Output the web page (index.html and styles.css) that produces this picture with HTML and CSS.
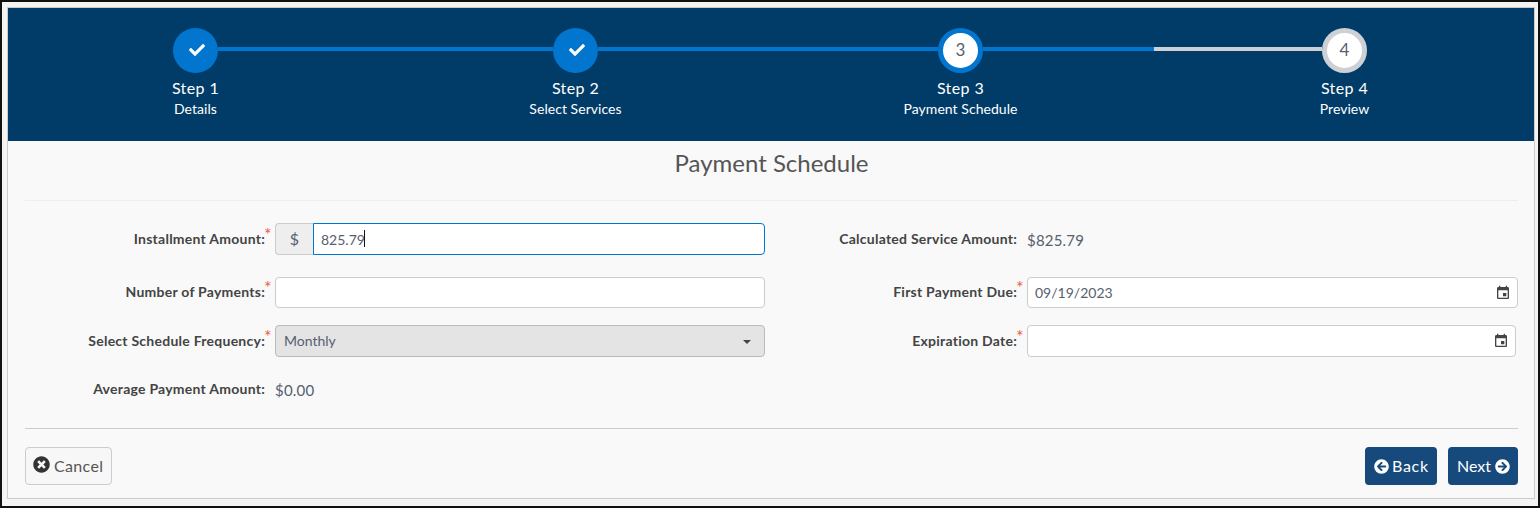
FILE: index.html
```html
<!DOCTYPE html>
<html lang="en">
<head>
    <meta charset="UTF-8">
    <title>Payment Schedule</title>
    <link rel="stylesheet" href="styles.css">
</head>
<body>
    <div class="panel">
        <div class="stepper">
            <div class="step done">
                <div class="step-circle">
                    <svg class="check" viewBox="0 0 512 512"><path d="M173.898 439.404l-166.4-166.4c-9.997-9.997-9.997-26.206 0-36.204l36.203-36.204c9.997-9.998 26.207-9.998 36.204 0L192 312.69 432.095 72.596c9.997-9.997 26.207-9.997 36.204 0l36.203 36.204c9.997 9.997 9.997 26.206 0 36.204l-294.4 294.401c-9.998 9.997-26.207 9.997-36.204-.001z"/></svg>
                </div>
                <div class="step-title">Step 1</div>
                <div class="step-name">Details</div>
            </div>
            <div class="connector first"></div>
            <div class="step done">
                <div class="step-circle">
                    <svg class="check" viewBox="0 0 512 512"><path d="M173.898 439.404l-166.4-166.4c-9.997-9.997-9.997-26.206 0-36.204l36.203-36.204c9.997-9.998 26.207-9.998 36.204 0L192 312.69 432.095 72.596c9.997-9.997 26.207-9.997 36.204 0l36.203 36.204c9.997 9.997 9.997 26.206 0 36.204l-294.4 294.401c-9.998 9.997-26.207 9.997-36.204-.001z"/></svg>
                </div>
                <div class="step-title">Step 2</div>
                <div class="step-name">Select Services</div>
            </div>
            <div class="connector second"></div>
            <div class="step current">
                <div class="step-circle">3</div>
                <div class="step-title">Step 3</div>
                <div class="step-name">Payment Schedule</div>
            </div>
            <div class="connector third"></div>
            <div class="step upcoming">
                <div class="step-circle">4</div>
                <div class="step-title">Step 4</div>
                <div class="step-name">Preview</div>
            </div>
        </div>

        <div class="content">
            <h2 class="title">Payment Schedule</h2>

            <form class="form-grid">
                <label class="field-label">Installment Amount:<span class="req">*</span></label>
                <div class="input-group">
                    <span class="addon">$</span>
                    <input type="text" class="input focused" value="825.79">
                    <span class="caret"></span>
                </div>
                <label class="field-label">Calculated Service Amount:</label>
                <div class="static-value">$825.79</div>

                <label class="field-label short">Number of Payments:<span class="req">*</span></label>
                <input type="text" class="input short">
                <label class="field-label short">First Payment Due:<span class="req">*</span></label>
                <input type="date" class="input date wide short" value="2023-09-19">

                <label class="field-label">Select Schedule Frequency:<span class="req">*</span></label>
                <div class="select-wrap">
                    <select class="input select" disabled>
                        <option>Monthly</option>
                    </select>
                    <span class="select-arrow"></span>
                </div>
                <label class="field-label">Expiration Date:<span class="req">*</span></label>
                <input type="date" class="input date empty">

                <label class="field-label short">Average Payment Amount:</label>
                <div class="static-value">$0.00</div>
            </form>

            <div class="footer">
                <button type="button" class="btn btn-cancel">
                    <svg class="icon" viewBox="0 0 512 512"><path d="M256 8C119 8 8 119 8 256s111 248 248 248 248-111 248-248S393 8 256 8zm121.6 313.1c4.7 4.7 4.7 12.3 0 17L338 377.6c-4.7 4.7-12.3 4.7-17 0L256 312l-65.1 65.6c-4.7 4.7-12.3 4.7-17 0L134.4 338c-4.7-4.7-4.7-12.3 0-17l65.6-65-65.6-65.1c-4.7-4.7-4.7-12.3 0-17l39.6-39.6c4.7-4.7 12.3-4.7 17 0l65 65.7 65.1-65.6c4.7-4.7 12.3-4.7 17 0l39.6 39.6c4.7 4.7 4.7 12.3 0 17L312 256l65.6 65.1z"/></svg>
                    <span class="btn-text">Cancel</span>
                </button>
                <div class="nav-buttons">
                    <button type="button" class="btn btn-primary back">
                        <svg class="icon" viewBox="0 0 512 512"><path d="M256 504C119 504 8 393 8 256S119 8 256 8s248 111 248 248-111 248-248 248zm28.9-143.6L209.4 288H392c13.3 0 24-10.7 24-24v-16c0-13.3-10.7-24-24-24H209.4l75.5-72.4c9.7-9.3 9.9-24.8.4-34.3l-11-10.9c-9.4-9.4-24.6-9.4-33.9 0L107.7 239c-9.4 9.4-9.4 24.6 0 33.9l132.7 132.7c9.4 9.4 24.6 9.4 33.9 0l11-10.9c9.5-9.5 9.3-25-.4-34.3z"/></svg>
                        <span class="btn-text">Back</span>
                    </button>
                    <button type="button" class="btn btn-primary next">
                        <span class="btn-text">Next</span>
                        <svg class="icon" viewBox="0 0 512 512"><path d="M256 8c137 0 248 111 248 248S393 504 256 504 8 393 8 256 119 8 256 8zm-28.9 143.6l75.5 72.4H120c-13.3 0-24 10.7-24 24v16c0 13.3 10.7 24 24 24h182.6l-75.5 72.4c-9.7 9.3-9.9 24.8-.4 34.3l11 10.9c9.4 9.4 24.6 9.4 33.9 0L404.3 273c9.4-9.4 9.4-24.6 0-33.9L271.6 106.3c-9.4-9.4-24.6-9.4-33.9 0l-11 10.9c-9.5 9.6-9.3 25.1.4 34.4z"/></svg>
                    </button>
                </div>
            </div>
        </div>
    </div>
</body>
</html>
```

FILE: styles.css
```css
* {
    margin: 0;
    padding: 0;
    box-sizing: border-box;
    font-family: Lato, "Open Sans", sans-serif;
}

body {
    width: 1540px;
    height: 508px;
    border: 2px solid #111;
    background-color: #f4f4f4;
    padding: 5px 3px 6px 5px;
    overflow: hidden;
}

.panel {
    height: 492px;
    border: 1px solid #ccc;
    background-color: #f9f9f9;
}

/* Stepper */
.stepper {
    height: 133px;
    background-color: #013c68;
    display: flex;
    align-items: flex-start;
    padding: 20px 0 0 165px;
}

.step {
    width: 45px;
    display: flex;
    flex-direction: column;
    align-items: center;
    color: #fff;
    white-space: nowrap;
}

.step-circle {
    width: 45px;
    height: 45px;
    border-radius: 50%;
    display: flex;
    justify-content: center;
    align-items: center;
    padding-bottom: 2px;
    background-color: #fff;
    color: #56606e;
    font-size: 17px;
    margin-bottom: 4px;
}

.step.done .step-circle {
    background-color: #0275cf;
}

.step.current .step-circle {
    border: 5px solid #0275cf;
}

.step.upcoming .step-circle {
    border: 5px solid #cdd0d4;
}

.check {
    width: 16px;
    height: 16px;
    margin-left: 2px;
    fill: #fff;
}

.step-title {
    font-size: 16px;
    line-height: 21px;
    letter-spacing: 0.4px;
}

.step-name {
    font-size: 14px;
    line-height: 21px;
    letter-spacing: 0.05px;
}

.connector {
    height: 4px;
    margin-top: 19px;
    background-color: #0275cf;
}

.connector.first {
    width: 335px;
}

.connector.second {
    width: 340px;
}

.connector.third {
    width: 339px;
    background: linear-gradient(to right, #0275cf 50.5%, #cdd0d4 50.5%);
}

/* Form */
.content {
    padding: 0 16px 0 17px;
}

.title {
    height: 60px;
    border-bottom: 1px solid #eee;
    text-align: center;
    font-size: 24px;
    font-weight: 400;
    line-height: 44px;
    color: #555;
}

.form-grid {
    display: grid;
    grid-template-columns: 250px 490px 262px 489px;
    grid-template-rows: 54px 48px 49px 32px;
    align-items: start;
    margin-top: 22px;
    padding-bottom: 22px;
    border-bottom: 1px solid #ccc;
}

.field-label {
    position: relative;
    justify-self: end;
    margin-right: 10px;
    height: 32px;
    line-height: 32px;
    font-size: 14px;
    font-weight: 700;
    letter-spacing: 0.25px;
    color: #444;
}

.field-label.short {
    line-height: 30px;
}

.req {
    position: absolute;
    left: 100%;
    top: -5px;
    margin-left: -1px;
    color: #f0594e;
    font-size: 18px;
    font-weight: 400;
}

.input {
    display: block;
    width: 100%;
    height: 32px;
    padding: 0 7px;
    border: 1px solid #ccc;
    border-radius: 4px;
    background-color: #fff;
    font-size: 14px;
    color: #56606e;
    outline: none;
}

.input.short {
    height: 31px;
}

.input-group {
    position: relative;
    display: flex;
}

.addon {
    width: 38px;
    height: 32px;
    flex-shrink: 0;
    border: 1px solid #ccc;
    border-right: none;
    border-radius: 4px 0 0 4px;
    background-color: #eee;
    text-align: center;
    line-height: 30px;
    font-size: 16px;
    color: #56606e;
}

.input.focused {
    border-color: #0275cf;
    border-radius: 0 4px 4px 0;
}

.caret {
    position: absolute;
    left: 89px;
    top: 7px;
    width: 1px;
    height: 17px;
    background-color: #111;
}

.input.date {
    padding: 0 6px 0 7px;
    font-size: 14px;
}

.input.date.wide {
    width: 491px;
}

.input.date.empty::-webkit-datetime-edit {
    color: transparent;
}

.input.date::-webkit-datetime-edit-month-field,
.input.date::-webkit-datetime-edit-day-field,
.input.date::-webkit-datetime-edit-year-field {
    padding: 0;
}

.input.date::-webkit-calendar-picker-indicator {
    width: 16px;
    height: 16px;
    padding: 0;
    margin: 0;
    background: url("data:image/svg+xml,%3Csvg xmlns='http://www.w3.org/2000/svg' viewBox='0 0 24 24'%3E%3Cpath fill='%23444' d='M17 12h-5v5h5v-5zM16 1v2H8V1H6v2H5c-1.11 0-1.99.9-1.99 2L3 19c0 1.1.89 2 2 2h14c1.1 0 2-.9 2-2V5c0-1.1-.9-2-2-2h-1V1h-2zm3 18H5V8h14v11z'/%3E%3C/svg%3E") center / 16px 16px no-repeat;
}

.select-wrap {
    position: relative;
}

.select {
    appearance: none;
    padding: 0 8px 2px;
    background-color: #e4e4e4;
    border-color: #bbb;
    opacity: 1;
}

.select-arrow {
    position: absolute;
    right: 14px;
    top: 15px;
    border-top: 4px solid #444;
    border-left: 4px solid transparent;
    border-right: 4px solid transparent;
}

.static-value {
    height: 32px;
    line-height: 32px;
    font-size: 15px;
    letter-spacing: 0.2px;
    color: #56606e;
}

.input-group + .field-label + .static-value {
    line-height: 34px;
}

/* Footer buttons */
.footer {
    display: flex;
    justify-content: space-between;
    margin-top: 18px;
}

.nav-buttons {
    display: flex;
    gap: 11px;
}

.btn {
    height: 38px;
    display: flex;
    align-items: center;
    border-radius: 4px;
    border: 1px solid transparent;
    font-size: 16px;
    cursor: pointer;
}

.btn-text {
    position: relative;
    top: -1px;
}

.btn-cancel {
    width: 87px;
    gap: 4px;
    padding: 0 7px;
    background-color: #f7f7f7;
    border-color: #ccc;
    color: #555;
    letter-spacing: 0.35px;
}

.btn-cancel .icon {
    width: 17px;
    height: 17px;
    margin-top: -3px;
    fill: #333;
}

.btn-primary {
    background-color: #174a7c;
    color: #fff;
}

.btn-primary .icon {
    fill: #fff;
}

.btn-primary.back {
    width: 72px;
    gap: 3px;
    padding: 0 8px;
    letter-spacing: 0.7px;
}

.btn-primary.next {
    width: 70px;
    gap: 4px;
    padding: 0 8px;
}

.icon {
    width: 15px;
    height: 15px;
    flex-shrink: 0;
}
```
